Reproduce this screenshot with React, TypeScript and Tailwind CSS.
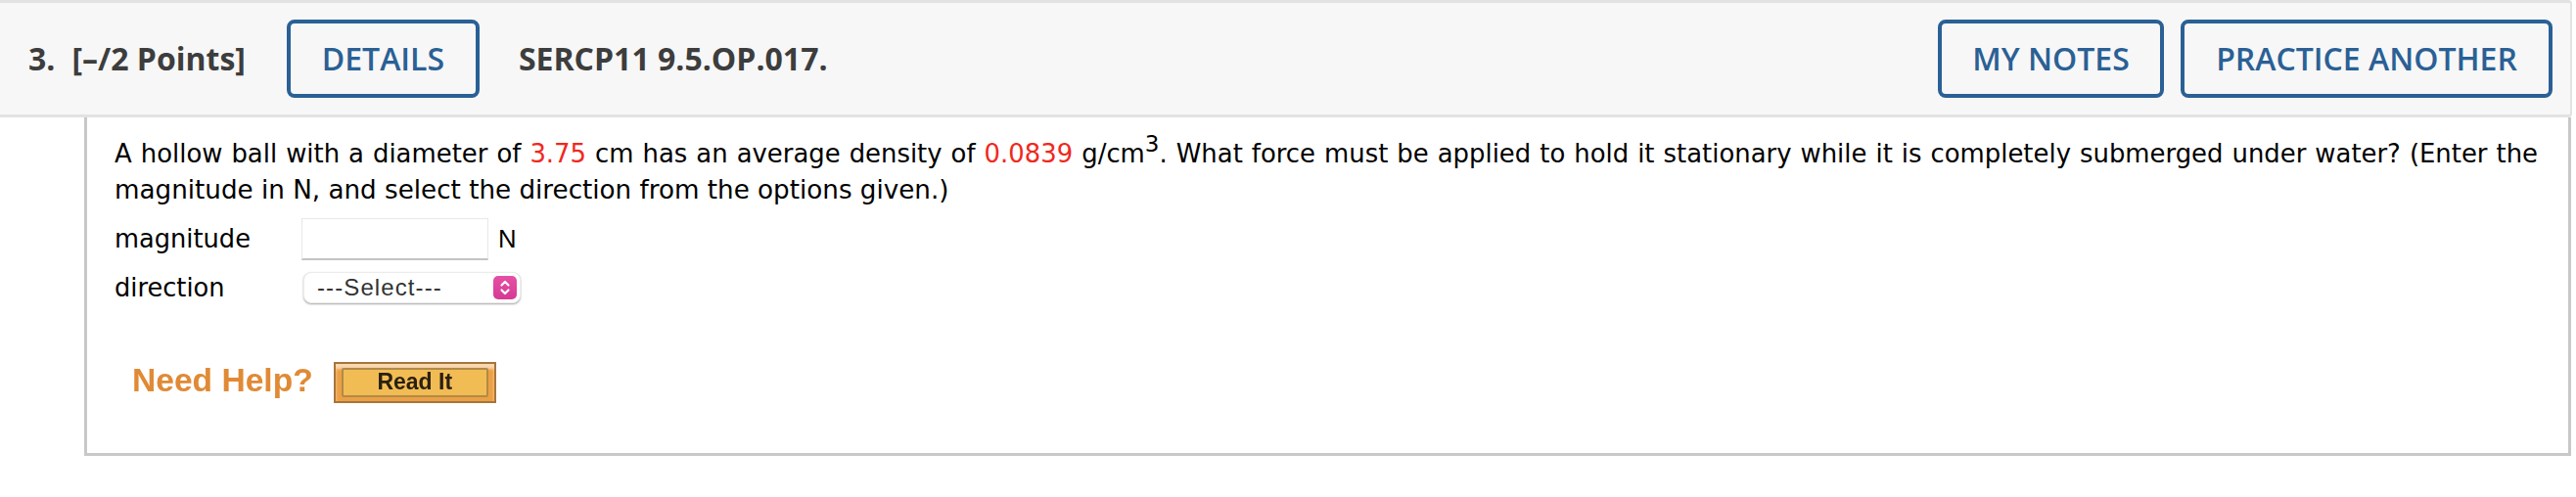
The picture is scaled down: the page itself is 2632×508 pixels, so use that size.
const headFont = "font-['Open_Sans',sans-serif]";

function OutlineButton({ label, width }: { label: string; width: string }) {
  return (
    <div
      className={`flex h-[80px] items-center justify-center rounded-[8px] border-[4px] border-[#2a6095] text-[32px] font-semibold text-[#2a6095] ${width}`}
    >
      {label}
    </div>
  );
}

export default function App() {
  return (
    <div className="h-[508px] w-[2632px] overflow-hidden bg-white">
      <div
        className={`flex h-[120px] w-[2628px] items-center rounded-r-[4px] border-y-[3px] border-r-[2px] border-[#e2e2e2] bg-[#f7f7f7] pr-[18px] pl-[29px] ${headFont}`}
      >
        <span className="text-[32px] font-bold text-[#3d3d3d]">3.</span>
        <span className="ml-[17px] text-[32px] font-bold text-[#3d3d3d]">[–/2 Points]</span>
        <div className="ml-[42px]">
          <OutlineButton label="DETAILS" width="w-[197px]" />
        </div>
        <span className="ml-[40px] text-[32px] font-bold text-[#3d3d3d]">SERCP11 9.5.OP.017.</span>
        <div className="ml-auto flex gap-[17px]">
          <OutlineButton label="MY NOTES" width="w-[231px]" />
          <OutlineButton label="PRACTICE ANOTHER" width="w-[380px]" />
        </div>
      </div>

      <div className="ml-[86px] h-[346px] w-[2541px] border-x-[3px] border-b-[3px] border-[#c8c8c8] pt-[19px] pl-[28px] font-['DejaVu_Sans',sans-serif] text-[25.7px] text-black">
        <div className="w-[2476px] leading-[37px]">
          <p className="text-justify text-[25.9px] [text-align-last:justify]">
            A hollow ball with a diameter of <span className="text-[#f0281e]">3.75</span> cm has an average density of{" "}
            <span className="text-[#f0281e]">0.0839</span> g/cm<sup className="text-[23px] leading-none">3</sup>. What
            force must be applied to hold it stationary while it is completely submerged under water? (Enter the
          </p>
          <p className="text-[26.2px]">magnitude in N, and select the direction from the options given.)</p>
        </div>

        <div className="mt-[10px] flex items-center">
          <span className="w-[191px]">magnitude</span>
          <div className="h-[43px] w-[191px] border border-b-[2px] border-[#e8e8e8] border-b-[#c4c4c4] bg-white" />
          <span className="ml-[10px] font-['Liberation_Sans',sans-serif]">N</span>
        </div>

        <div className="mt-[9px] flex items-center">
          <span className="w-[193px]">direction</span>
          <div className="flex h-[32px] w-[222px] items-center justify-between rounded-[8px] border border-[#ececec] bg-white pr-[3px] pl-[13px] font-['Liberation_Sans',sans-serif] text-[24px] leading-none tracking-[1.1px] text-[#333333] shadow-[0_1px_2px_rgba(0,0,0,0.35)]">
            <span>---Select---</span>
            <div className="flex h-[24px] w-[24px] items-center justify-center rounded-[5px] bg-gradient-to-b from-[#e64fa6] to-[#d63a94]">
              <svg width="12" height="18" viewBox="0 0 12 18" fill="none" stroke="white" strokeWidth="2.2" strokeLinecap="round" strokeLinejoin="round">
                <path d="M2.5 6.5 6 3l3.5 3.5" />
                <path d="M2.5 11.5 6 15l3.5-3.5" />
              </svg>
            </div>
          </div>
        </div>

        <div className="mt-[56px] ml-[18px] flex items-center">
          <span className="-translate-y-[2px] font-['Liberation_Sans',sans-serif] text-[33.6px] leading-none font-bold text-[#e08a35] blur-[0.6px]">
            Need Help?
          </span>
          <div className="ml-[21px] h-[42px] w-[166px] border-[2px] border-[#a8743a] bg-[#eca044] px-[6px] pt-[4px] shadow-[inset_0_5px_3px_rgba(255,255,255,0.6)]">
            <div className="flex h-[30px] items-center justify-center rounded-[2px] border-[2px] border-[#b08a48] bg-[#f2bc54] font-['Liberation_Sans',sans-serif] text-[23px] font-bold text-[#2a2010] blur-[0.5px]">
              Read It
            </div>
          </div>
        </div>
      </div>
    </div>
  );
}
